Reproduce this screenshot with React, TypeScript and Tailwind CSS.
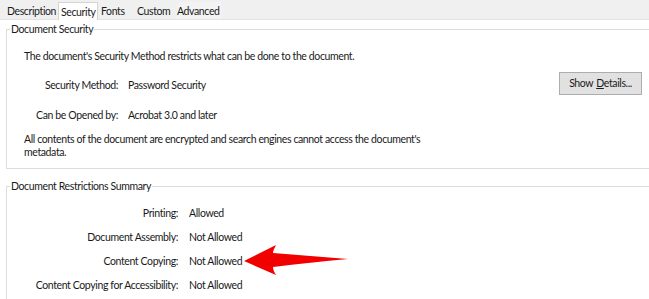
import React from "react";

export default function App() {
  return (
    <div
      className="w-[649px] h-[299px] bg-white overflow-hidden relative text-[10.5px] tracking-[-0.38px] text-[#1a1a1a] whitespace-nowrap"
      style={{ fontFamily: 'Lato, "Noto Sans", sans-serif' }}
    >
      {/* tab strip */}
      <div className="h-[20px] bg-[#f0f0f0] flex items-end pl-[4px] border-b border-[#e3e3e3]">
        <div className="h-[17px] w-[54px] pl-[3px] pt-[1px] leading-[17px]">Description</div>
        <div className="h-[18px] w-[40px] bg-white border border-b-0 border-[#d4d4d4] pl-[2px] pt-[1px] leading-[16px] -mb-px">
          Security
        </div>
        <div className="h-[17px] pl-[3px] pt-[1px] leading-[17px] w-[39px]">Fonts</div>
        <div className="h-[17px] pl-[0px] pt-[1px] leading-[17px] w-[40px]">Custom</div>
        <div className="h-[17px] pl-[0px] pr-[2px] pt-[1px] leading-[17px] bg-[#f3f3f3]">Advanced</div>
      </div>

      <div className="pl-[6px] pt-[9px]">
        {/* Document Security group */}
        <div className="relative border border-r-0 border-[#dcdcdc] h-[140px]">
          <div className="absolute -top-[7px] left-[3px] bg-white px-[1px] leading-[13px]">
            Document Security
          </div>
          <div className="pl-[17px] pt-[20px] leading-[13px]">
            The document's Security Method restricts what can be done to the document.
          </div>
          <div className="flex items-start mt-[16px]">
            <div className="w-[111px] text-right leading-[13px]">Security Method:</div>
            <div className="pl-[10px] leading-[13px]">Password Security</div>
            <div className="ml-auto mr-[7px] -mt-[7px] w-[83px] h-[23px] bg-[#e1e1e1] border border-[#adadad] flex items-center justify-center">
              Show <span className="underline ml-[3px]">D</span>etails...
            </div>
          </div>
          <div className="flex items-start mt-[14px]">
            <div className="w-[111px] text-right leading-[13px]">Can be Opened by:</div>
            <div className="pl-[10px] leading-[13px]">Acrobat 3.0 and later</div>
          </div>
          <div className="pl-[17px] mt-[11px] leading-[13px]">
            All contents of the document are encrypted and search engines cannot access the document's
            <br />
            metadata.
          </div>
        </div>

        {/* Document Restrictions Summary group */}
        <div className="relative border border-r-0 border-b-0 border-[#dcdcdc] mt-[17px] h-[120px]">
          <div className="absolute -top-[7px] left-[3px] bg-white px-[1px] leading-[13px]">
            Document Restrictions Summary
          </div>
          <div className="flex flex-col gap-[11px] pt-[20px]">
            {[
              ["Printing:", "Allowed"],
              ["Document Assembly:", "Not Allowed"],
              ["Content Copying:", "Not Allowed"],
              ["Content Copying for Accessibility:", "Not Allowed"],
            ].map(([k, v]) => (
              <div key={k} className="flex leading-[13px]">
                <div className="w-[171px] text-right">{k}</div>
                <div className="pl-[11px]">{v}</div>
              </div>
            ))}
          </div>
        </div>
      </div>

      {/* red arrow annotation */}
      <svg
        className="absolute left-[243px] top-[243px]"
        width="108"
        height="34"
        viewBox="0 0 108 34"
      >
        <path
          d="M1 18 L33 2 C31 6 30 8 30 10 C55 12 80 14 105 16 C80 18 55 21 30 24 C30 26 31 29 33 32 Z"
          fill="#f20000"
        />
      </svg>
    </div>
  );
}
